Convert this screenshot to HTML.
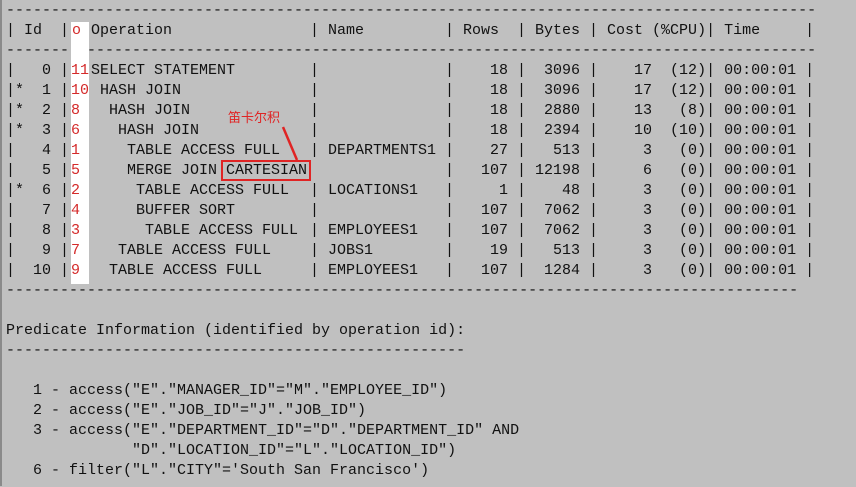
<!DOCTYPE html>
<html><head><meta charset="utf-8"><style>
html,body{margin:0;padding:0}
body{width:856px;height:486px;background:#c0c0c0;position:relative;overflow:hidden;font-family:"Liberation Mono",monospace;font-size:15px;color:#111}
.bl{position:absolute;left:0;top:0;width:2px;height:486px;background:#8a8a8a}
.t{position:absolute;left:1px;top:1px;width:856px;height:486px}
.l{position:absolute;white-space:pre;line-height:20px;height:20px}
.wc{position:absolute;left:70px;top:21px;width:18px;height:262px;background:#fff;z-index:1}
.r{color:#d42a2a;z-index:2}
.box{position:absolute;left:221px;top:160px;width:86px;height:17px;border:2px solid #e02424}
.cn{position:absolute;left:228px;top:108px;font-family:"Noto Sans CJK SC",sans-serif;font-size:13px;color:#e02424;line-height:18px}
</style></head><body>
<div class="bl"></div>
<div class="t">
<div class="wc"></div>
<div class="l" style="left:5px;top:0">------------------------------------------------------------------------------------------</div>
<div class="l" style="left:5px;top:20px">| Id  |</div>
<div class="l r" style="left:71px;top:20px">o</div>
<div class="l" style="left:90px;top:20px">Operation</div>
<div class="l" style="left:309px;top:20px">| Name         | Rows  | Bytes | Cost (%CPU)| Time     |</div>
<div class="l" style="left:5px;top:40px">------------------------------------------------------------------------------------------</div>

<div class="l" style="left:5px;top:60px">|   0 |</div><div class="l r" style="left:70px;top:60px">11</div><div class="l" style="left:90px;top:60px">SELECT STATEMENT</div><div class="l" style="left:309px;top:60px">|              |    18 |  3096 |    17  (12)| 00:00:01 |</div>
<div class="l" style="left:5px;top:80px">|*  1 |</div><div class="l r" style="left:70px;top:80px">10</div><div class="l" style="left:90px;top:80px"> HASH JOIN</div><div class="l" style="left:309px;top:80px">|              |    18 |  3096 |    17  (12)| 00:00:01 |</div>
<div class="l" style="left:5px;top:100px">|*  2 |</div><div class="l r" style="left:70px;top:100px">8</div><div class="l" style="left:90px;top:100px">  HASH JOIN</div><div class="l" style="left:309px;top:100px">|              |    18 |  2880 |    13   (8)| 00:00:01 |</div>
<div class="l" style="left:5px;top:120px">|*  3 |</div><div class="l r" style="left:70px;top:120px">6</div><div class="l" style="left:90px;top:120px">   HASH JOIN</div><div class="l" style="left:309px;top:120px">|              |    18 |  2394 |    10  (10)| 00:00:01 |</div>
<div class="l" style="left:5px;top:140px">|   4 |</div><div class="l r" style="left:70px;top:140px">1</div><div class="l" style="left:90px;top:140px">    TABLE ACCESS FULL</div><div class="l" style="left:309px;top:140px">| DEPARTMENTS1 |    27 |   513 |     3   (0)| 00:00:01 |</div>
<div class="l" style="left:5px;top:160px">|   5 |</div><div class="l r" style="left:70px;top:160px">5</div><div class="l" style="left:90px;top:160px">    MERGE JOIN CARTESIAN</div><div class="l" style="left:309px;top:160px">               |   107 | 12198 |     6   (0)| 00:00:01 |</div>
<div class="l" style="left:5px;top:180px">|*  6 |</div><div class="l r" style="left:70px;top:180px">2</div><div class="l" style="left:90px;top:180px">     TABLE ACCESS FULL</div><div class="l" style="left:309px;top:180px">| LOCATIONS1   |     1 |    48 |     3   (0)| 00:00:01 |</div>
<div class="l" style="left:5px;top:200px">|   7 |</div><div class="l r" style="left:70px;top:200px">4</div><div class="l" style="left:90px;top:200px">     BUFFER SORT</div><div class="l" style="left:309px;top:200px">|              |   107 |  7062 |     3   (0)| 00:00:01 |</div>
<div class="l" style="left:5px;top:220px">|   8 |</div><div class="l r" style="left:70px;top:220px">3</div><div class="l" style="left:90px;top:220px">      TABLE ACCESS FULL</div><div class="l" style="left:309px;top:220px">| EMPLOYEES1   |   107 |  7062 |     3   (0)| 00:00:01 |</div>
<div class="l" style="left:5px;top:240px">|   9 |</div><div class="l r" style="left:70px;top:240px">7</div><div class="l" style="left:90px;top:240px">   TABLE ACCESS FULL</div><div class="l" style="left:309px;top:240px">| JOBS1        |    19 |   513 |     3   (0)| 00:00:01 |</div>
<div class="l" style="left:5px;top:260px">|  10 |</div><div class="l r" style="left:70px;top:260px">9</div><div class="l" style="left:90px;top:260px">  TABLE ACCESS FULL</div><div class="l" style="left:309px;top:260px">| EMPLOYEES1   |   107 |  1284 |     3   (0)| 00:00:01 |</div>

<div class="l" style="left:5px;top:280px">----------------------------------------------------------------------------------------</div>
<div class="l" style="left:5px;top:320px">Predicate Information (identified by operation id):</div>
<div class="l" style="left:5px;top:340px">---------------------------------------------------</div>
<div class="l" style="left:5px;top:380px">   1 - access("E"."MANAGER_ID"="M"."EMPLOYEE_ID")</div>
<div class="l" style="left:5px;top:400px">   2 - access("E"."JOB_ID"="J"."JOB_ID")</div>
<div class="l" style="left:5px;top:420px">   3 - access("E"."DEPARTMENT_ID"="D"."DEPARTMENT_ID" AND</div>
<div class="l" style="left:5px;top:440px">              "D"."LOCATION_ID"="L"."LOCATION_ID")</div>
<div class="l" style="left:5px;top:460px">   6 - filter("L"."CITY"='South San Francisco')</div>
</div>
<div class="box"></div>
<div class="cn">笛卡尔积</div>
<svg style="position:absolute;left:0;top:0" width="856" height="486"><line x1="283" y1="127" x2="297" y2="160" stroke="#e02424" stroke-width="2.5"/></svg>
</body></html>
